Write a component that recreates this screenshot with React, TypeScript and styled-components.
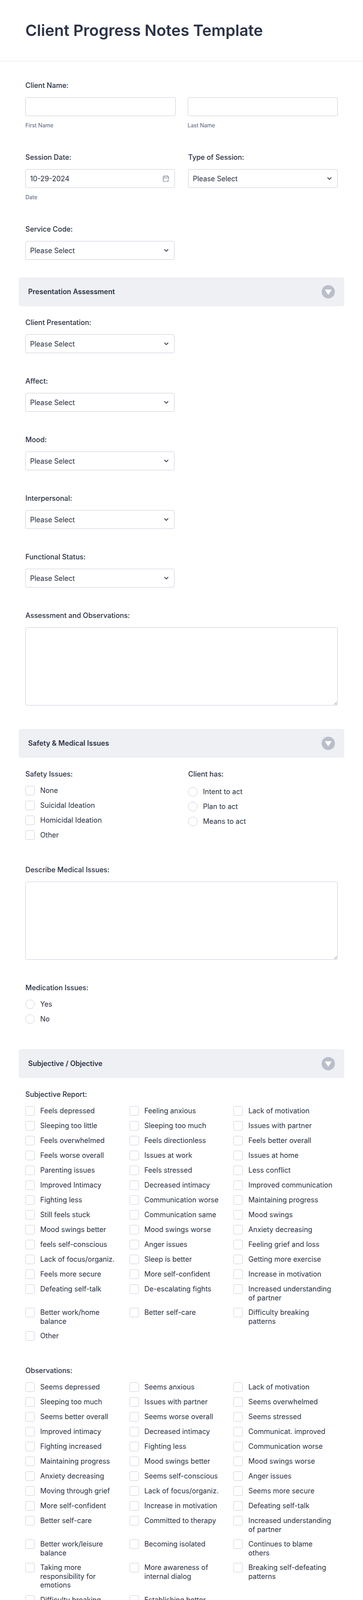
import styled, { createGlobalStyle } from 'styled-components';
import { ChevronDown, CalendarCheck2 } from 'lucide-react';

const ink = '#2c3345';
const muted = '#57647e';
const line = '#c3cad8';

const GlobalStyle = createGlobalStyle`
  * { box-sizing: border-box; }
  body {
    margin: 0;
    background: #fff;
    color: ${ink};
    font-family: Inter, 'Noto Sans', 'Liberation Sans', sans-serif;
  }
`;

const Page = styled.div`
  width: 100%;
  background: #fff;
`;

const Header = styled.header`
  padding: 54px 65px 54px;
  border-bottom: 1px solid #e3e5ea;
`;

const Title = styled.h1`
  margin: 0;
  font-size: 40px;
  line-height: 48px;
  font-weight: 600;
  color: ${ink};
`;

const FormBody = styled.div`
  padding: 20px 48px 3px;
`;

const Field = styled.div`
  padding: 30px 17px;
`;

const FieldRow = styled.div`
  display: grid;
  grid-template-columns: 1fr 1fr;
`;

const Label = styled.div`
  font-size: 18px;
  line-height: 24px;
  font-weight: 500;
  color: ${ink};
  margin-bottom: 18px;
`;

const SubLabel = styled.div`
  margin-top: 14px;
  font-size: 14px;
  line-height: 20px;
  color: ${muted};
`;

const NameGrid = styled.div`
  display: grid;
  grid-template-columns: 1fr 1fr;
  column-gap: 31px;
`;

const TextInput = styled.input<{ $half?: boolean }>`
  display: block;
  width: ${(p) => (p.$half ? '382px' : '100%')};
  height: 48px;
  padding: 0 40px 0 11px;
  border: 1px solid ${line};
  border-radius: 4px;
  background: #fff;
  font: inherit;
  font-size: 18px;
  color: ${ink};
  outline: none;
`;

const Control = styled.div<{ $half?: boolean }>`
  position: relative;
  width: ${(p) => (p.$half ? '382px' : '100%')};
`;

const Select = styled.select`
  display: block;
  width: 100%;
  height: 48px;
  padding: 0 40px 0 11px;
  border: 1px solid ${line};
  border-radius: 4px;
  background: #fff;
  font: inherit;
  font-size: 18px;
  color: ${ink};
  appearance: none;
  outline: none;
`;

const ControlIcon = styled.span<{ $right: number }>`
  position: absolute;
  top: 50%;
  right: ${(p) => p.$right}px;
  display: flex;
  transform: translateY(-50%);
  color: ${ink};
  pointer-events: none;
`;

const TextArea = styled.textarea`
  display: block;
  width: 100%;
  height: 200px;
  padding: 10px 11px;
  border: 1px solid ${line};
  border-radius: 4px;
  font: inherit;
  font-size: 18px;
  color: ${ink};
  outline: none;
`;

const SectionHeader = styled.div<{ $tight?: boolean }>`
  display: flex;
  align-items: center;
  justify-content: space-between;
  height: 74px;
  margin-top: ${(p) => (p.$tight ? '15px' : '30px')};
  padding: 0 24px;
  background: #eef0f4;
  border-radius: 6px;
`;

const SectionTitle = styled.h2`
  margin: 0;
  font-size: 18px;
  line-height: 24px;
  font-weight: 600;
  color: ${ink};
`;

const OptionGrid = styled.div<{ $cols: number; $offset?: number }>`
  display: grid;
  grid-template-columns: repeat(${(p) => p.$cols}, 1fr);
  row-gap: 14px;
  margin-top: ${(p) => 2 + (p.$offset ?? 0)}px;
  padding-bottom: 5px;
`;

const OptionItem = styled.label<{ $full?: boolean }>`
  display: flex;
  align-items: flex-start;
  gap: 14px;
  padding-right: 8px;
  grid-column: ${(p) => (p.$full ? '1 / -1' : 'auto')};
  cursor: pointer;
`;

const Check = styled.input`
  flex: none;
  width: 24px;
  height: 24px;
  margin: 0;
  border: 1px solid ${line};
  border-radius: 4px;
  background: #fff;
  appearance: none;
`;

const Radio = styled(Check)`
  border-radius: 50%;
`;

const OptionText = styled.span`
  padding-top: 1px;
  font-size: 18px;
  line-height: 22.5px;
  color: ${ink};
`;

const Footer = styled.div`
  display: flex;
  justify-content: center;
  padding: 37px 0 64px;
  border-top: 1px solid #e3e5ea;
`;

const SubmitButton = styled.button`
  width: 221px;
  height: 59px;
  border: none;
  border-radius: 4px;
  background: #18bd5b;
  color: #fff;
  font: inherit;
  font-size: 18px;
  font-weight: 500;
  cursor: pointer;
`;

const subjective = [
  'Feels depressed', 'Feeling anxious', 'Lack of motivation',
  'Sleeping too little', 'Sleeping too much', 'Issues with partner',
  'Feels overwhelmed', 'Feels directionless', 'Feels better overall',
  'Feels worse overall', 'Issues at work', 'Issues at home',
  'Parenting issues', 'Feels stressed', 'Less conflict',
  'Improved Intimacy', 'Decreased intimacy', 'Improved communication',
  'Fighting less', 'Communication worse', 'Maintaining progress',
  'Still feels stuck', 'Communication same', 'Mood swings',
  'Mood swings better', 'Mood swings worse', 'Anxiety decreasing',
  'feels self-conscious', 'Anger issues', 'Feeling grief and loss',
  'Lack of focus/organiz.', 'Sleep is better', 'Getting more exercise',
  'Feels more secure', 'More self-confident', 'Increase in motivation',
  'Defeating self-talk', 'De-escalating fights', 'Increased understanding of partner',
  'Better work/home balance', 'Better self-care', 'Difficulty breaking patterns',
];

const observations = [
  'Seems depressed', 'Seems anxious', 'Lack of motivation',
  'Sleeping too much', 'Issues with partner', 'Seems overwhelmed',
  'Seems better overall', 'Seems worse overall', 'Seems stressed',
  'Improved intimacy', 'Decreased intimacy', 'Communicat. improved',
  'Fighting increased', 'Fighting less', 'Communication worse',
  'Maintaining progress', 'Mood swings better', 'Mood swings worse',
  'Anxiety decreasing', 'Seems self-conscious', 'Anger issues',
  'Moving through grief', 'Lack of focus/organiz.', 'Seems more secure',
  'More self-confident', 'Increase in motivation', 'Defeating self-talk',
  'Better self-care', 'Committed to therapy', 'Increased understanding of partner',
  'Better work/leisure balance', 'Becoming isolated', 'Continues to blame others',
  'Taking more responsibility for emotions', 'More awareness of internal dialog', 'Breaking self-defeating patterns',
  'Difficulty breaking patterns', 'Establishing better boundaries',
];

const interventions = [
  'Cognitive Challenging', 'Cognitive Refocusing', 'Cognitive Reframing',
  'Communication Skills', 'Compliance Issues', 'Expl. Relationship Ptrn',
  'Expl. Coping Patterns', 'Explore Emotions', 'Guided Imagery',
  'Interactive Feedback', 'Interpersonal Res.', 'Mindfulness Training',
  'Preventative Services', 'Psycho-education', 'Relaxation Techniques',
  'Review of Progress', 'Role Play', 'Problem Solving',
  'Supportive Reflection', 'Symptom Mgt', 'Somatic Exercises',
  'EMDR', 'Active Imagination', 'Dream Exploration',
  'DBT', 'Mirroring', 'Homework',
];

const recommendations = [
  'Continue Therapeutic Focus',
  'Change Treatment Goals / Objectives',
  'Increase Frequency of Sessions',
  'Decrease Frequency of Sessions',
  'Terminate Treatment',
  'Other',
];

const Toggle = () => (
  <svg width="34" height="34" viewBox="0 0 34 34" aria-hidden="true">
    <circle cx="17" cy="17" r="17" fill="#babecb" />
    <path d="M9.5 12h15L17 23.5z" fill="#fff" stroke="#fff" strokeWidth="1.5" strokeLinejoin="round" />
  </svg>
);

const Section = ({ title, tight }: { title: string; tight?: boolean }) => (
  <SectionHeader $tight={tight}>
    <SectionTitle>{title}</SectionTitle>
    <Toggle />
  </SectionHeader>
);

const Dropdown = ({ label }: { label: string }) => (
  <Field>
    <Label>{label}</Label>
    <Control $half>
      <Select defaultValue="">
        <option value="">Please Select</option>
      </Select>
      <ControlIcon $right={12}>
        <ChevronDown size={18} strokeWidth={2.4} />
      </ControlIcon>
    </Control>
  </Field>
);

const LongText = ({ label }: { label: string }) => (
  <Field>
    <Label>{label}</Label>
    <TextArea />
  </Field>
);

type ChoiceProps = {
  label: string;
  options: string[];
  cols?: number;
  radio?: boolean;
  other?: boolean;
  offset?: number;
};

const Choices = ({ label, options, cols = 1, radio, other, offset }: ChoiceProps) => {
  const Box = radio ? Radio : Check;
  const name = label.replace(/\W+/g, '-').toLowerCase();
  return (
    <Field>
      <Label>{label}</Label>
      <OptionGrid $cols={cols} $offset={offset}>
        {options.map((opt) => (
          <OptionItem key={opt}>
            <Box type={radio ? 'radio' : 'checkbox'} name={name} />
            <OptionText>{opt}</OptionText>
          </OptionItem>
        ))}
        {other && (
          <OptionItem $full>
            <Box type={radio ? 'radio' : 'checkbox'} name={name} />
            <OptionText>Other</OptionText>
          </OptionItem>
        )}
      </OptionGrid>
    </Field>
  );
};

export default function App() {
  return (
    <Page>
      <GlobalStyle />
      <Header>
        <Title>Client Progress Notes Template</Title>
      </Header>

      <FormBody>
        <Field>
          <Label>Client Name:</Label>
          <NameGrid>
            <div>
              <TextInput type="text" />
              <SubLabel>First Name</SubLabel>
            </div>
            <div>
              <TextInput type="text" />
              <SubLabel>Last Name</SubLabel>
            </div>
          </NameGrid>
        </Field>

        <FieldRow>
          <Field>
            <Label>Session Date:</Label>
            <Control>
              <TextInput type="text" defaultValue="10-29-2024" />
              <ControlIcon $right={14}>
                <CalendarCheck2 size={18} strokeWidth={1.6} color={muted} />
              </ControlIcon>
            </Control>
            <SubLabel>Date</SubLabel>
          </Field>
          <Field>
            <Label>Type of Session:</Label>
            <Control>
              <Select defaultValue="">
                <option value="">Please Select</option>
              </Select>
              <ControlIcon $right={12}>
                <ChevronDown size={18} strokeWidth={2.4} />
              </ControlIcon>
            </Control>
          </Field>
        </FieldRow>

        <Dropdown label="Service Code:" />

        <Section title="Presentation Assessment" tight />
        <Dropdown label="Client Presentation:" />
        <Dropdown label="Affect:" />
        <Dropdown label="Mood:" />
        <Dropdown label="Interpersonal:" />
        <Dropdown label="Functional Status:" />
        <LongText label="Assessment and Observations:" />

        <Section title="Safety & Medical Issues" />
        <FieldRow>
          <Choices label="Safety Issues:" options={['None', 'Suicidal Ideation', 'Homicidal Ideation', 'Other']} />
          <Choices label="Client has:" radio offset={19} options={['Intent to act', 'Plan to act', 'Means to act']} />
        </FieldRow>
        <LongText label="Describe Medical Issues:" />
        <Choices label="Medication Issues:" radio options={['Yes', 'No']} />

        <Section title="Subjective / Objective" />
        <Choices label="Subjective Report:" cols={3} other options={subjective} />
        <Choices label="Observations:" cols={3} other options={observations} />
        <LongText label="Comments:" />

        <Section title="Interventions" />
        <Choices label="Interventions:" cols={3} other options={interventions} />

        <Section title="Objectives & Progress" />
        <Field>
          <Label>Objective 1:</Label>
          <TextInput type="text" $half />
        </Field>
        <LongText label="Notes:" />
        <Choices label="Recommendations:" radio options={recommendations} />
      </FormBody>

      <Footer>
        <SubmitButton type="button">Submit</SubmitButton>
      </Footer>
    </Page>
  );
}
